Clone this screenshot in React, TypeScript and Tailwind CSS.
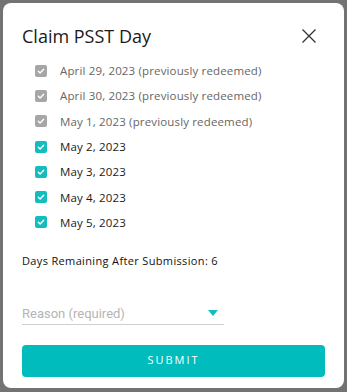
import React from "react";

const days = [
  { label: "April 29, 2023 (previously redeemed)", used: true },
  { label: "April 30, 2023 (previously redeemed)", used: true },
  { label: "May 1, 2023 (previously redeemed)", used: true },
  { label: "May 2, 2023", used: false },
  { label: "May 3, 2023", used: false },
  { label: "May 4, 2023", used: false },
  { label: "May 5, 2023", used: false },
];

function Check({ used }: { used: boolean }) {
  return (
    <span
      className={`w-[12px] h-[12px] rounded-[2px] flex items-center justify-center ${used ? "bg-[#a6a6a6]" : "bg-[#14bdbd]"}`}
    >
      <svg width="8" height="8" viewBox="0 0 8 8" fill="none">
        <path d="M1.3 4.2 L3.1 5.9 L6.7 2.2" stroke="white" strokeWidth="1.4" strokeLinecap="round" strokeLinejoin="round" />
      </svg>
    </span>
  );
}

export default function App() {
  return (
    <div className="w-[347px] h-[392px] bg-[#737373] p-[3px] pb-[4px] font-['Open_Sans',sans-serif]">
      <div className="w-full h-full bg-white rounded-[8px] px-[19px] pt-[21px]">
        <div className="flex items-center justify-between">
          <h1 className="text-[18px] text-[#1a1a1a] leading-[24px]">Claim PSST Day</h1>
          <svg width="16" height="16" viewBox="0 0 16 16" className="mr-[8px]">
            <path d="M1.5 1.5 L14.5 14.5 M14.5 1.5 L1.5 14.5" stroke="#333" strokeWidth="1.3" />
          </svg>
        </div>
        <ul className="mt-[10px] pl-[13px] flex flex-col">
          {days.map((d) => (
            <li key={d.label} className="h-[25.3px] flex items-center gap-[13px]">
              <Check used={d.used} />
              <span className={`text-[11.5px] tracking-[0.15px] ${d.used ? "text-[#666]" : "text-[#1a1a1a]"}`}>{d.label}</span>
            </li>
          ))}
        </ul>
        <p className="mt-[18px] text-[11px] tracking-[0.35px] text-[#111]">Days Remaining After Submission: 6</p>
        <div className="mt-[35px] w-[202px] border-b border-[#d0d0d0] flex items-center justify-between pb-[2px] font-['Roboto',sans-serif]">
          <span className="text-[13px] text-[#b5b5b5] leading-[17px]">Reason (required)</span>
          <svg width="10" height="6" viewBox="0 0 10 6" className="mr-[6px]">
            <path d="M0 0 H10 L5 6 Z" fill="#14bdbd" />
          </svg>
        </div>
        <button className="mt-[20px] w-full h-[32px] bg-[#00bcbc] rounded-[4px] text-white text-[11px] tracking-[2px]">
          SUBMIT
        </button>
      </div>
    </div>
  );
}
